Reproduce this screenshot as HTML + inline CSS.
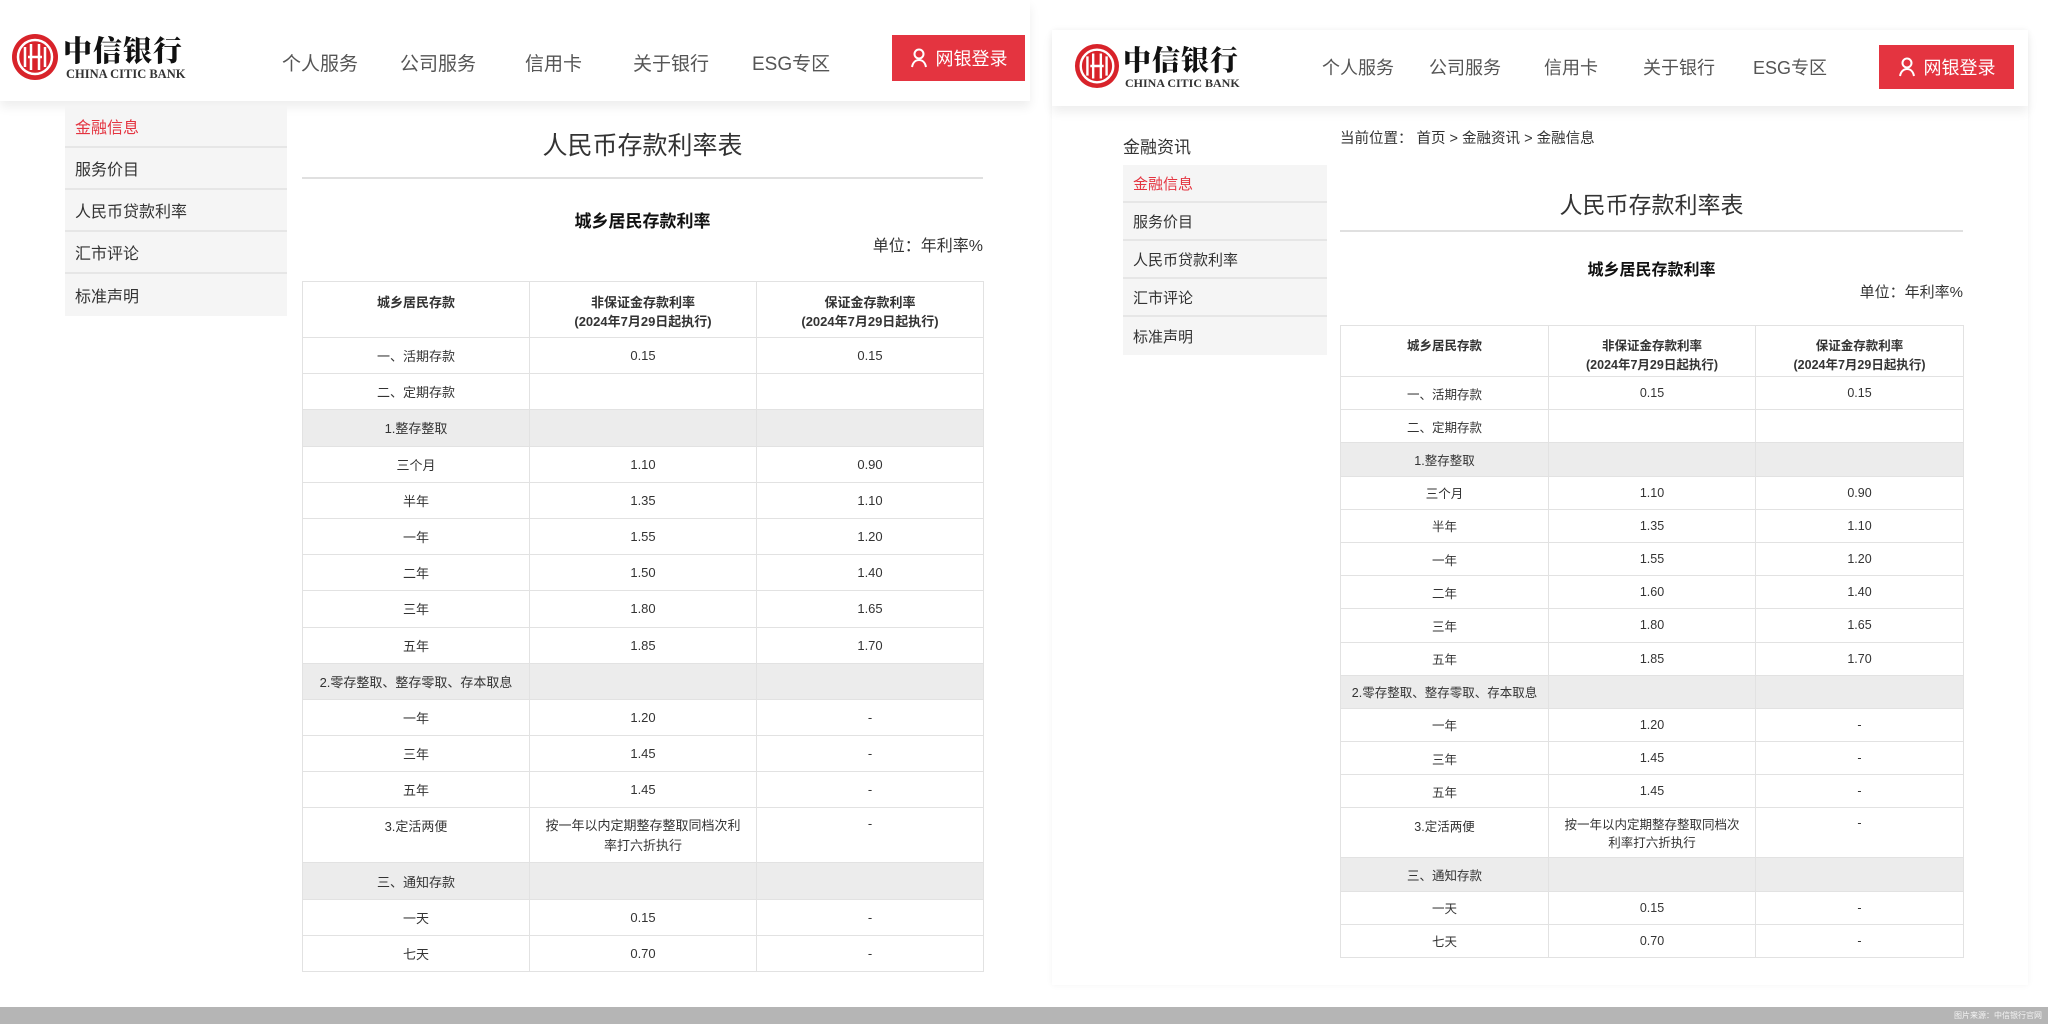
<!DOCTYPE html>
<html><head><meta charset="utf-8"><style>
*{margin:0;padding:0;box-sizing:border-box}
body{width:2048px;height:1024px;position:relative;background:#fff;font-family:"Liberation Sans","Noto Sans CJK SC",sans-serif;color:#333;overflow:hidden}
.a{position:absolute}
.hdr{background:#fff;box-shadow:0 6px 10px rgba(0,0,0,0.07)}
.cn{font-family:"Noto Serif CJK SC","Noto Sans CJK SC",serif;font-weight:900;color:#111;white-space:nowrap;line-height:1}
.en{font-family:"Liberation Serif",serif;font-weight:bold;color:#333;white-space:nowrap;line-height:1}
.nav{color:#555;white-space:nowrap}
.btn{background:#e43440;color:#fff;display:flex;align-items:center;justify-content:center;gap:8px}
.side div{background:#f5f5f5;border-bottom:2px solid #e6e6e6;color:#333;padding-left:10px;display:flex;align-items:center}
.side div.on{color:#e43440}
table{border-collapse:collapse;position:absolute;table-layout:fixed}
td{border:1px solid #e2e2e2;text-align:center;vertical-align:middle;color:#333}
tr.g td{background:#ececec}
tr.h td{font-weight:bold;vertical-align:top}
tr.t td{vertical-align:top}
</style></head><body>

<!-- LEFT PANEL -->
<div class="a hdr" style="left:0;top:0;width:1030px;height:101px"></div>
<svg class="a" style="left:11px;top:33px" width="48" height="48" viewBox="0 0 48 48"><circle cx="24" cy="24" r="23" fill="#d8232a"/><circle cx="24" cy="24" r="17" fill="none" stroke="#fff" stroke-width="2.5"/><path d="M14 14v20M20 11v26M28 11v26M34 14v20M17 24h14" stroke="#fff" stroke-width="2.5" fill="none"/></svg>
<div class="a cn" style="left:63px;top:35px;font-size:29px;letter-spacing:1px">中信银行</div>
<div class="a en" style="left:66px;top:68px;font-size:12.5px">CHINA CITIC BANK</div>
<div class="a nav" style="left:282px;top:49px;font-size:19px">个人服务</div>
<div class="a nav" style="left:400px;top:49px;font-size:19px">公司服务</div>
<div class="a nav" style="left:525px;top:49px;font-size:19px">信用卡</div>
<div class="a nav" style="left:633px;top:49px;font-size:19px">关于银行</div>
<div class="a nav" style="left:752px;top:49px;font-size:19px">ESG专区</div>
<div class="a btn" style="left:892px;top:35px;width:133px;height:46px;font-size:18px"><svg width="18" height="20" viewBox="0 0 18 20"><circle cx="9" cy="6" r="4.5" fill="none" stroke="#fff" stroke-width="2"/><path d="M2 19c1-5 4-7 7-7s6 2 7 7" fill="none" stroke="#fff" stroke-width="2"/></svg>网银登录</div>

<div class="a side" style="left:65px;top:106px;width:222px">
<div class="on" style="height:42px;font-size:16px">金融信息</div>
<div style="height:42px;font-size:16px">服务价目</div>
<div style="height:42px;font-size:16px">人民币贷款利率</div>
<div style="height:42px;font-size:16px">汇市评论</div>
<div style="height:42px;font-size:16px;border-bottom:none">标准声明</div>
</div>

<div class="a" style="left:302px;top:126px;width:681px;text-align:center;font-size:25px;color:#333">人民币存款利率表</div>
<div class="a" style="left:302px;top:177px;width:681px;height:2px;background:#e0e0e0"></div>
<div class="a" style="left:302px;top:207px;width:681px;text-align:center;font-size:17px;font-weight:bold;color:#111">城乡居民存款利率</div>
<div class="a" style="left:302px;top:232px;width:681px;text-align:right;font-size:16px;color:#333">单位：年利率%</div>

<table style="left:302px;top:281px;width:681px;font-size:13px">
<colgroup><col style="width:227px"><col style="width:227px"><col style="width:227px"></colgroup>
<tr class="h" style="height:56px"><td style="padding-top:10px">城乡居民存款</td><td style="padding-top:10px">非保证金存款利率<br>(2024年7月29日起执行)</td><td style="padding-top:10px">保证金存款利率<br>(2024年7月29日起执行)</td></tr>
<tr style="height:36.2px"><td>一、活期存款</td><td>0.15</td><td>0.15</td></tr>
<tr style="height:36.2px"><td>二、定期存款</td><td></td><td></td></tr>
<tr class="g" style="height:36.2px"><td>1.整存整取</td><td></td><td></td></tr>
<tr style="height:36.2px"><td>三个月</td><td>1.10</td><td>0.90</td></tr>
<tr style="height:36.2px"><td>半年</td><td>1.35</td><td>1.10</td></tr>
<tr style="height:36.2px"><td>一年</td><td>1.55</td><td>1.20</td></tr>
<tr style="height:36.2px"><td>二年</td><td>1.50</td><td>1.40</td></tr>
<tr style="height:36.2px"><td>三年</td><td>1.80</td><td>1.65</td></tr>
<tr style="height:36.2px"><td>五年</td><td>1.85</td><td>1.70</td></tr>
<tr class="g" style="height:36.2px"><td>2.零存整取、整存零取、存本取息</td><td></td><td></td></tr>
<tr style="height:36.2px"><td>一年</td><td>1.20</td><td>-</td></tr>
<tr style="height:36.2px"><td>三年</td><td>1.45</td><td>-</td></tr>
<tr style="height:36.2px"><td>五年</td><td>1.45</td><td>-</td></tr>
<tr class="t" style="height:55px"><td style="padding-top:8px">3.定活两便</td><td style="padding-top:8px;padding-left:14px;padding-right:14px;line-height:20px">按一年以内定期整存整取同档次利率打六折执行</td><td style="padding-top:8px">-</td></tr>
<tr class="g" style="height:36.2px"><td>三、通知存款</td><td></td><td></td></tr>
<tr style="height:36.2px"><td>一天</td><td>0.15</td><td>-</td></tr>
<tr style="height:36.2px"><td>七天</td><td>0.70</td><td>-</td></tr>
</table>

<!-- RIGHT PANEL -->
<div class="a" style="left:1052px;top:30px;width:976px;height:955px;box-shadow:0 0 6px rgba(0,0,0,0.05);background:#fff"></div>
<div class="a hdr" style="left:1052px;top:30px;width:976px;height:76px"></div>
<svg class="a" style="left:1074px;top:43px" width="46" height="46" viewBox="0 0 48 48"><circle cx="24" cy="24" r="23" fill="#d8232a"/><circle cx="24" cy="24" r="17" fill="none" stroke="#fff" stroke-width="2.5"/><path d="M14 14v20M20 11v26M28 11v26M34 14v20M17 24h14" stroke="#fff" stroke-width="2.5" fill="none"/></svg>
<div class="a cn" style="left:1123px;top:45px;font-size:28px;letter-spacing:1px">中信银行</div>
<div class="a en" style="left:1125px;top:77px;font-size:12px">CHINA CITIC BANK</div>
<div class="a nav" style="left:1322px;top:54px;font-size:18px">个人服务</div>
<div class="a nav" style="left:1429px;top:54px;font-size:18px">公司服务</div>
<div class="a nav" style="left:1544px;top:54px;font-size:18px">信用卡</div>
<div class="a nav" style="left:1643px;top:54px;font-size:18px">关于银行</div>
<div class="a nav" style="left:1753px;top:54px;font-size:18px">ESG专区</div>
<div class="a btn" style="left:1879px;top:45px;width:135px;height:44px;font-size:18px"><svg width="18" height="20" viewBox="0 0 18 20"><circle cx="9" cy="6" r="4.5" fill="none" stroke="#fff" stroke-width="2"/><path d="M2 19c1-5 4-7 7-7s6 2 7 7" fill="none" stroke="#fff" stroke-width="2"/></svg>网银登录</div>

<div class="a" style="left:1123px;top:133px;font-size:17px;color:#333">金融资讯</div>
<div class="a side" style="left:1123px;top:165px;width:204px">
<div class="on" style="height:38px;font-size:15px">金融信息</div>
<div style="height:38px;font-size:15px">服务价目</div>
<div style="height:38px;font-size:15px">人民币贷款利率</div>
<div style="height:38px;font-size:15px">汇市评论</div>
<div style="height:38px;font-size:15px;border-bottom:none">标准声明</div>
</div>
<div class="a" style="left:1340px;top:127px;font-size:14.5px;color:#333">当前位置：&nbsp;首页 &gt; 金融资讯 &gt; 金融信息</div>

<div class="a" style="left:1340px;top:186px;width:623px;text-align:center;font-size:23px;color:#333">人民币存款利率表</div>
<div class="a" style="left:1340px;top:230px;width:623px;height:2px;background:#e0e0e0"></div>
<div class="a" style="left:1340px;top:256px;width:623px;text-align:center;font-size:16px;font-weight:bold;color:#111">城乡居民存款利率</div>
<div class="a" style="left:1340px;top:281px;width:623px;text-align:right;font-size:15px;color:#333">单位：年利率%</div>

<table style="left:1340px;top:325px;width:623px;font-size:12.5px">
<colgroup><col style="width:208px"><col style="width:207px"><col style="width:208px"></colgroup>
<tr class="h" style="height:51px"><td style="padding-top:9px">城乡居民存款</td><td style="padding-top:9px">非保证金存款利率<br>(2024年7月29日起执行)</td><td style="padding-top:9px">保证金存款利率<br>(2024年7月29日起执行)</td></tr>
<tr style="height:33.2px"><td>一、活期存款</td><td>0.15</td><td>0.15</td></tr>
<tr style="height:33.2px"><td>二、定期存款</td><td></td><td></td></tr>
<tr class="g" style="height:33.2px"><td>1.整存整取</td><td></td><td></td></tr>
<tr style="height:33.2px"><td>三个月</td><td>1.10</td><td>0.90</td></tr>
<tr style="height:33.2px"><td>半年</td><td>1.35</td><td>1.10</td></tr>
<tr style="height:33.2px"><td>一年</td><td>1.55</td><td>1.20</td></tr>
<tr style="height:33.2px"><td>二年</td><td>1.60</td><td>1.40</td></tr>
<tr style="height:33.2px"><td>三年</td><td>1.80</td><td>1.65</td></tr>
<tr style="height:33.2px"><td>五年</td><td>1.85</td><td>1.70</td></tr>
<tr class="g" style="height:33.2px"><td>2.零存整取、整存零取、存本取息</td><td></td><td></td></tr>
<tr style="height:33.2px"><td>一年</td><td>1.20</td><td>-</td></tr>
<tr style="height:33.2px"><td>三年</td><td>1.45</td><td>-</td></tr>
<tr style="height:33.2px"><td>五年</td><td>1.45</td><td>-</td></tr>
<tr class="t" style="height:50px"><td style="padding-top:8px">3.定活两便</td><td style="padding-top:8px;padding-left:10px;padding-right:10px;line-height:18px">按一年以内定期整存整取同档次利率打六折执行</td><td style="padding-top:8px">-</td></tr>
<tr class="g" style="height:33.2px"><td>三、通知存款</td><td></td><td></td></tr>
<tr style="height:33.2px"><td>一天</td><td>0.15</td><td>-</td></tr>
<tr style="height:33.2px"><td>七天</td><td>0.70</td><td>-</td></tr>
</table>

<!-- bottom bar -->
<div class="a" style="left:0;top:1007px;width:2048px;height:17px;background:#b5b5b5"></div>
<div class="a" style="right:6px;top:1010px;font-size:8px;color:#f4f4f4">图片来源：中信银行官网</div>
</body></html>
